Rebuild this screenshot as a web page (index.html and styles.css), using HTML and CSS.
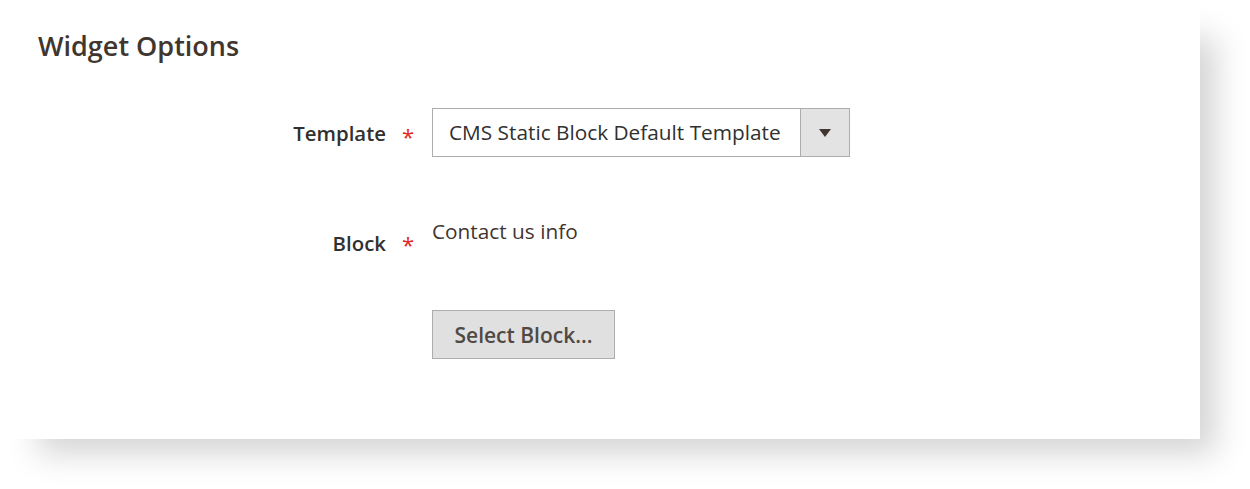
FILE: index.html
```html
<!DOCTYPE html>
<html>
<head>
<meta charset="utf-8">
<link rel="stylesheet" href="styles.css">
</head>
<body>
<div class="card">
  <h2 class="legend">Widget Options</h2>
  <div class="field field-template">
    <div class="label"><span>Template</span></div>
    <div class="req">*</div>
    <div class="control">
      <div class="select">
        <span class="select-text">CMS Static Block Default Template</span>
        <span class="select-btn"><span class="tri"></span></span>
      </div>
    </div>
  </div>
  <div class="field field-block">
    <div class="label label-block"><span>Block</span></div>
    <div class="req req-block">*</div>
    <div class="control">
      <div class="value">Contact us info</div>
      <button class="btn">Select Block...</button>
    </div>
  </div>
</div>
</body>
</html>
```
FILE: styles.css
```css
html, body {
  margin: 0;
  padding: 0;
  background: #ffffff;
}
body {
  font-family: "Open Sans", "Noto Sans", sans-serif;
  width: 1250px;
  height: 489px;
  overflow: hidden;
}
.card {
  width: 1200px;
  height: 439px;
  background: #ffffff;
  box-shadow: 27px 26px 30px -11px rgba(0, 0, 0, 0.17);
  box-sizing: border-box;
  padding: 28px 0 0 38px;
}
.legend {
  margin: 0;
  font-size: 27px;
  font-weight: 600;
  color: #41362f;
  line-height: 36px;
}
.field {
  display: grid;
  grid-template-columns: 348px 46px 1fr;
}
.field-template {
  margin-top: 44px;
  align-items: center;
}
.field-block {
  margin-top: 52px;
}
.label {
  text-align: right;
  font-size: 20.4px;
  font-weight: 600;
  color: #303030;
}
.label-block {
  padding-top: 20px;
  line-height: 28px;
}
.req {
  color: #e22626;
  font-size: 22px;
  padding-left: 16px;
  line-height: 28px;
  padding-top: 6px;
}
.req-block {
  padding-top: 21px;
}
.control {
  display: flex;
  flex-direction: column;
  align-items: flex-start;
}
.select {
  width: 418px;
  height: 49px;
  box-sizing: border-box;
  border: 1px solid #adadad;
  display: flex;
  align-items: stretch;
  background: #fff;
}
.select-text {
  flex: 1;
  padding-left: 16px;
  font-size: 20.8px;
  color: #303030;
  line-height: 46px;
}
.select-btn {
  width: 48px;
  background: #e3e3e3;
  border-left: 1px solid #adadad;
  display: flex;
  align-items: center;
  justify-content: center;
}
.tri {
  width: 0;
  height: 0;
  border-left: 6px solid transparent;
  border-right: 6px solid transparent;
  border-top: 8px solid #41362f;
}
.value {
  font-size: 20.8px;
  color: #41362f;
  line-height: 28px;
  padding-top: 8px;
}
.btn {
  margin-top: 65px;
  width: 183px;
  height: 49px;
  box-sizing: border-box;
  background: #e0e0e0;
  border: 1px solid #adadad;
  font-family: "Open Sans", "Noto Sans", sans-serif;
  font-size: 21px;
  font-weight: 600;
  color: #514943;
  padding: 0;
}
```
